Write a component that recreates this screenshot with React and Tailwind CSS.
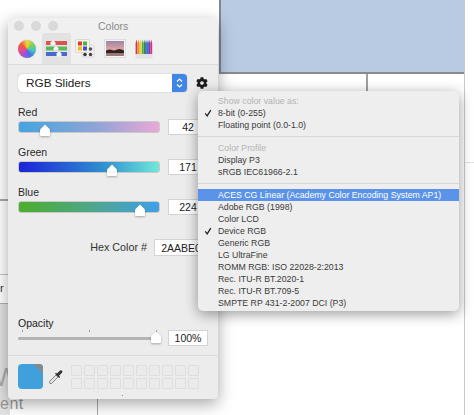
import React from "react";
import { FaCog } from "react-icons/fa";

const font = { fontFamily: '"Liberation Sans", Arial, sans-serif' };

// Pointed slider knob
function Thumb({ className }) {
  return (
    <svg viewBox="0 0 12 12" className={`absolute w-[12px] h-[12px] drop-shadow-[0_1px_1px_rgba(0,0,0,0.3)] ${className}`}>
      <path d="M6 0.5 L11 5.5 V11 Q11 12 10 12 H2 Q1 12 1 11 V5.5 Z" fill="#ffffff" />
    </svg>
  );
}

function Slider({ label, value, gradient, thumb }) {
  return (
    <div>
      <div className="text-[10.5px] leading-[14px] text-[#2a2a2a]">{label}</div>
      <div className="flex items-center">
        <div className={`relative w-[142px] h-[12px] rounded-[3px] border border-[#c9c9c9] ${gradient}`}>
          <Thumb className={thumb} />
        </div>
        <div className="ml-[8px] w-[40px] h-[16px] leading-[15px] bg-white border border-[#d4d4d4] text-center text-[10.5px] text-[#222]">{value}</div>
      </div>
    </div>
  );
}

function ColorWheel() {
  return <div className="w-[18px] h-[18px] rounded-full bg-[conic-gradient(#f2d43c,#7fd04a,#43c6c8,#4a6ee0,#a54fd8,#e84a8a,#ee5a3a,#f2d43c)] shadow-[0_0_1px_rgba(0,0,0,0.4)]" />;
}

function SlidersIcon() {
  return (
    <svg width="21" height="17" viewBox="0 0 21 17">
      <rect x="0" y="1" width="21" height="4" fill="#d9534f" />
      <rect x="0" y="6.5" width="21" height="4" fill="#5cb85c" />
      <rect x="0" y="12" width="21" height="4" fill="#4a69d0" />
      <path d="M7 0 L9.5 2.5 V5 H4.5 V2.5 Z" fill="#f4f4f4" />
      <path d="M10 5.5 L12.5 8 V10.5 H7.5 V8 Z" fill="#f4f4f4" />
      <path d="M13 11 L15.5 13.5 V16.5 H10.5 V13.5 Z" fill="#f4f4f4" />
    </svg>
  );
}

function PaletteIcon() {
  return (
    <svg width="20" height="19" viewBox="0 0 20 19">
      <rect x="7" y="6" width="12" height="12" rx="1" fill="#f5f5f5" stroke="#c8c8c8" strokeWidth="0.6" />
      <rect x="0.5" y="0.5" width="14" height="13" rx="1" fill="#f7f3dc" stroke="#c8c8c8" strokeWidth="0.6" />
      <rect x="3" y="2.5" width="4" height="4" fill="#d93a32" />
      <rect x="8" y="2.5" width="4" height="4" fill="#4caf50" />
      <rect x="3" y="7.5" width="4" height="4" fill="#f2b632" />
      <rect x="8" y="7.5" width="4" height="4" fill="#3d52c8" />
      <circle cx="10" cy="15.5" r="1.8" fill="#333" />
      <circle cx="15.5" cy="15.5" r="1.8" fill="#444" />
      <circle cx="15.5" cy="10" r="1.8" fill="#555" />
    </svg>
  );
}

function PictureIcon() {
  return (
    <svg width="22" height="19" viewBox="0 0 22 19">
      <defs>
        <linearGradient id="sky" x1="0" y1="0" x2="0" y2="1">
          <stop offset="0" stopColor="#9a86a8" />
          <stop offset="0.6" stopColor="#e8a6a0" />
          <stop offset="1" stopColor="#e8b890" />
        </linearGradient>
      </defs>
      <rect x="0.3" y="0.3" width="21.4" height="18.4" fill="#f6f6f6" stroke="#d0d0d0" strokeWidth="0.6" />
      <rect x="2" y="2" width="18" height="15" fill="url(#sky)" />
      <path d="M2 11.5 Q6 10 8 11 T13 10.5 T20 11.5 V14.5 H2 Z" fill="#2c2426" />
      <rect x="2" y="14.5" width="18" height="2.5" fill="#a07a78" />
    </svg>
  );
}

function PencilsIcon() {
  const colors = ["#d83a34", "#e8932c", "#e6cf3a", "#4caf50", "#2f7f6a", "#3d6fd0", "#6a3fb0", "#c8348c"];
  return (
    <svg width="18" height="20" viewBox="0 0 18 20">
      <rect x="0.5" y="15" width="17" height="4.5" fill="#e2e2e2" />
      {colors.map((c, i) => (
        <g key={c}>
          <path d={`M${i * 2.1 + 0.6} 4 L${i * 2.1 + 1.5} 0.5 L${i * 2.1 + 2.4} 4 Z`} fill={c} />
          <rect x={i * 2.1 + 0.6} y="4" width="1.9" height="11" fill={c} />
        </g>
      ))}
    </svg>
  );
}

function Eyedropper() {
  return (
    <svg width="16" height="16" viewBox="0 0 16 16">
      <path d="M2 14.5 L1.5 12.5 L8 6 L10 8 L3.5 14.5 Z" fill="#e6e6e6" stroke="#777" strokeWidth="0.9" />
      <path d="M7 4.8 L11.2 9 L12.2 8 L11 6.8 L14 3.8 Q15 2.6 13.8 1.6 Q12.7 0.8 11.8 1.8 L9 4.6 L8 3.8 Z" fill="#333" />
    </svg>
  );
}

function Swatches() {
  const cells = Array.from({ length: 20 }, (_, i) => i);
  return (
    <div className="ml-[7px] grid grid-cols-[repeat(10,11px)] gap-x-[2px] gap-y-[1.5px] mt-[1px]">
      {cells.map((i) => (
        <div key={i} className="h-[11px] rounded-[1px] border border-[#dedede] bg-[#ebebeb]" />
      ))}
    </div>
  );
}

function Check() {
  return (
    <svg viewBox="0 0 10 10" className="absolute left-[6px] top-[2px] w-[8px] h-[8px]">
      <path d="M1.5 5.5 L4 8.5 L8.5 1.5" fill="none" stroke="#222" strokeWidth="1.6" />
    </svg>
  );
}

function MenuItem({ children, checked, header, active }) {
  let color = "text-[#3a3a3a]";
  if (header) color = "text-[#b4b4b4]";
  if (active) color = "bg-[#5b93ea] text-white";
  return (
    <div className={`relative h-[12px] leading-[12px] pl-[20px] text-[8.75px] whitespace-nowrap ${color}`}>
      {checked && <Check />}
      {children}
    </div>
  );
}

function Separator() {
  return <div className="my-[5px] h-px bg-[#d8d8d8]" />;
}

export default function App() {
  return (
    <div className="relative w-[474px] h-[415px] overflow-hidden bg-white" style={font}>
      {/* Document behind the floating panels */}
      <div className="absolute left-[219px] top-0 w-[245px] h-[74px] bg-[#b8cbe2] border-l-2 border-b-2 border-l-[#7f8792] border-b-[#8b8b8b]" />
      <div className="absolute left-[366px] top-[74px] w-[2px] h-[20px] bg-[#a0a0a0]" />
      <div className="absolute left-[464px] top-0 w-px h-[415px] bg-[#c8c8c8]" />
      <div className="absolute left-[465px] top-[162px] w-[9px] h-px bg-[#e2e2e2]" />
      <div className="absolute left-0 top-[199px] w-[10px] h-[2px] bg-[#a8a8a8]" />
      <div className="absolute left-0 top-[274px] w-[10px] h-px bg-[#c0c0c0]" />
      <div className="absolute left-0 top-[281px] text-[11px] leading-[14px] text-[#333]">r</div>
      <div className="absolute left-0 top-[303px] w-[10px] h-[112px] bg-[#e2e2e2] border-t border-[#b0b0b0]" />
      <div className="absolute left-[-6px] top-[362px] text-[26px] leading-[30px] text-[#aaa]">W</div>
      <div className="absolute left-0 top-[395px] text-[16px] leading-[18px] text-[#999] tracking-[0.5px]">ent</div>
      <div className="absolute left-[97px] top-[395px] w-px h-[20px] bg-[#a8a8a8]" />

      {/* Colors panel */}
      <div className="absolute left-[8px] top-[18px] w-[210px] h-[381px] rounded-[4px] bg-[#ececec] shadow-[0_5px_16px_rgba(0,0,0,0.35)]">
        <div className="h-[47px] border-b border-[#dcdcdc] bg-[#f0f0f0] rounded-t-[4px]">
          <div className="relative h-[15px]">
            <div className="absolute left-[6px] top-[3px] flex gap-[7px]">
              <span className="w-[10px] h-[10px] rounded-full bg-[#d9d9d9]" />
              <span className="w-[10px] h-[10px] rounded-full bg-[#d9d9d9]" />
              <span className="w-[10px] h-[10px] rounded-full bg-[#d9d9d9]" />
            </div>
            <div className="pl-[90px] text-[10.5px] leading-[16px] text-[#8a8a8a]">Colors</div>
          </div>
          <div className="flex items-center h-[31px] pl-[10px]">
            <ColorWheel />
            <div className="ml-[6px] w-[29px] h-[31px] bg-[#e2e2e2] rounded-t-[3px] flex items-center justify-center">
              <SlidersIcon />
            </div>
            <div className="ml-[4px]"><PaletteIcon /></div>
            <div className="ml-[9px]"><PictureIcon /></div>
            <div className="ml-[9px]"><PencilsIcon /></div>
          </div>
        </div>

        <div className="pl-[10px] pr-[10px]">
          <div className="flex items-center mt-[9px]">
            <div className="flex w-[170px] h-[18px] rounded-[4px] bg-white shadow-[0_0_1px_rgba(0,0,0,0.5)] overflow-hidden">
              <div className="flex-1 pl-[8px] text-[11.75px] leading-[18px] text-[#222]">RGB Sliders</div>
              <div className="w-[15px] bg-[#3f86e8] flex items-center justify-center">
                <svg width="7" height="12" viewBox="0 0 7 12">
                  <path d="M1 4.5 L3.5 2 L6 4.5 M1 7.5 L3.5 10 L6 7.5" fill="none" stroke="#fff" strokeWidth="1.2" />
                </svg>
              </div>
            </div>
            <FaCog className="ml-[9px] w-[12px] h-[12px] text-[#1c1c1c]" />
          </div>

          <div className="mt-[13px]">
            <Slider label="Red" value="42" thumb="left-[20px] top-[2px]"
              gradient="bg-[linear-gradient(to_right,#45a4df,#8fa4d6_55%,#eaa8d8)]" />
          </div>
          <div className="mt-[10px]">
            <Slider label="Green" value="171" thumb="left-[87px] top-[2px]"
              gradient="bg-[linear-gradient(to_right,#1c22d8,#2f8fcf_60%,#6fe8da)]" />
          </div>
          <div className="mt-[10px]">
            <Slider label="Blue" value="224" thumb="left-[115px] top-[2px]"
              gradient="bg-[linear-gradient(to_right,#4cae2a,#4ea59a_60%,#3fa0e8)]" />
          </div>

          <div className="flex items-center justify-end mt-[24px]">
            <div className="text-[10.75px] text-[#333]">Hex Color #</div>
            <div className="ml-[7px] w-[54px] h-[17px] bg-white border border-[#d4d4d4] text-center text-[10.5px] leading-[16px] text-[#222]">2AABE0</div>
          </div>

          <div className="mt-[60px] text-[10.5px] leading-[14px] text-[#222]">Opacity</div>
          <div className="flex items-center h-[16px]">
            <div className="relative w-[142px] h-[3px] bg-[#b4b4b4] rounded-full">
              <span className="absolute left-[4px] top-[-7px] w-px h-[2px] bg-[#9a9a9a]" />
              <span className="absolute left-[71px] top-[-7px] w-px h-[2px] bg-[#9a9a9a]" />
              <span className="absolute left-[138px] top-[-7px] w-px h-[2px] bg-[#9a9a9a]" />
              <Thumb className="left-[132px] top-[-6px]" />
            </div>
            <div className="ml-[8px] w-[40px] h-[16px] bg-white border border-[#d4d4d4] text-center text-[10.5px] leading-[15px] text-[#222]">100%</div>
          </div>
        </div>

        <div className="mt-[9px] border-t border-[#dcdcdc] pl-[10px] pt-[8px]">
          <div className="flex items-start">
            <div className="relative w-[25px] h-[25px] rounded-[4px] bg-[#3fa0dc] overflow-hidden">
              <svg viewBox="0 0 10 10" className="absolute right-0 top-0 w-[10px] h-[10px]">
                <path d="M0 0 H10 V10 Z" fill="#7f8a92" />
              </svg>
            </div>
            <div className="ml-[5px] mt-[5px]"><Eyedropper /></div>
            <Swatches />
          </div>
          <div className="ml-[104px] mt-[6px] w-px h-px bg-[#999]" />
        </div>
      </div>

      {/* Gear menu */}
      <div className="absolute left-[198px] top-[91px] w-[261px] h-[220px] rounded-[5px] bg-[#eeeeee] pt-[4px] shadow-[0_3px_14px_rgba(0,0,0,0.4)]">
        <MenuItem header>Show color value as:</MenuItem>
        <MenuItem checked>8-bit (0-255)</MenuItem>
        <MenuItem>Floating point (0.0-1.0)</MenuItem>
        <Separator />
        <MenuItem header>Color Profile</MenuItem>
        <MenuItem>Display P3</MenuItem>
        <MenuItem>sRGB IEC61966-2.1</MenuItem>
        <Separator />
        <MenuItem active>ACES CG Linear (Academy Color Encoding System AP1)</MenuItem>
        <MenuItem>Adobe RGB (1998)</MenuItem>
        <MenuItem>Color LCD</MenuItem>
        <MenuItem checked>Device RGB</MenuItem>
        <MenuItem>Generic RGB</MenuItem>
        <MenuItem>LG UltraFine</MenuItem>
        <MenuItem>ROMM RGB: ISO 22028-2:2013</MenuItem>
        <MenuItem>Rec. ITU-R BT.2020-1</MenuItem>
        <MenuItem>Rec. ITU-R BT.709-5</MenuItem>
        <MenuItem>SMPTE RP 431-2-2007 DCI (P3)</MenuItem>
      </div>
    </div>
  );
}
